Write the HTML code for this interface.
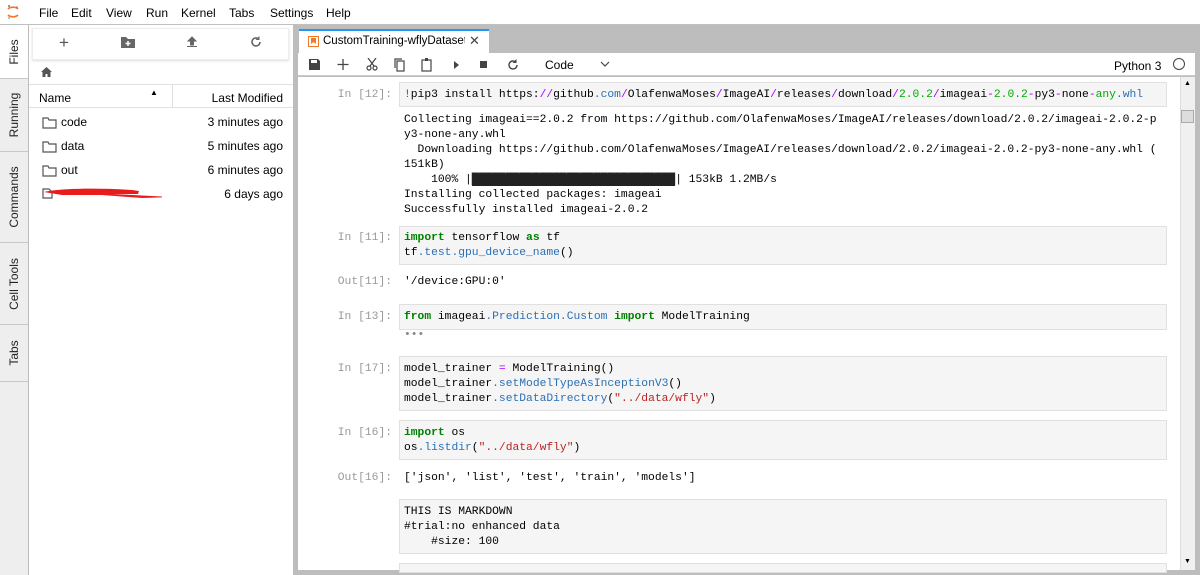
<!DOCTYPE html>
<html><head><meta charset="utf-8"><style>
*{box-sizing:border-box;margin:0;padding:0}
body{width:1200px;height:575px;overflow:hidden;background:#fff;font-family:"Liberation Sans",sans-serif;font-size:12px;color:#000;position:relative}
.abs{position:absolute;white-space:nowrap}
.menu{left:0;top:0;width:1200px;height:25px;background:#fff;border-bottom:1px solid #c0c0c0}
.menu span{position:absolute;top:6px;font-size:12px}
.lt{left:0;top:25px;width:29px;height:550px;background:#eee;border-right:1px solid #bdbdbd}
.tab{position:absolute;left:0;width:28px;border-bottom:1px solid #c8c8c8}
.tab span{position:absolute;left:50%;top:50%;transform:translate(-50%,-50%) rotate(-90deg);white-space:nowrap;font-size:12px;color:#222}
.fp{left:29px;top:25px;width:265px;height:550px;background:#fff}
.split{left:293px;top:25px;width:6px;height:550px;background:#bdbdbd}
.mainbg{left:298px;top:25px;width:902px;height:550px;background:#bdbdbd}
.mono{font-family:"Liberation Mono",monospace;font-size:11.3px;white-space:pre;line-height:15px}
.pr{position:absolute;width:94px;text-align:right;left:298px;color:#999}
.box{position:absolute;left:399px;width:768px;background:#f5f5f5;border:1px solid #e0e0e0}
.ln{position:absolute;left:404px}
.k{color:#008000;font-weight:bold}.b{color:#2a6fb5}.p{color:#a0f}.g{color:#0a0}.r{color:#b22}
.rt{position:absolute;right:11px;text-align:right;white-space:nowrap}
</style></head><body>
<div class="abs menu">
 <svg class="abs" style="left:6px;top:4px" width="14" height="16" viewBox="0 0 14 16"><path d="M2 5a6 4 0 0 1 10 0M2 11a6 4 0 0 0 10 0" fill="none" stroke="#f37726" stroke-width="1.6"/><circle cx="3" cy="2" r="1" fill="#777"/><circle cx="11" cy="3" r=".8" fill="#777"/><circle cx="3" cy="14" r=".8" fill="#777"/></svg>
 <span style="left:39px">File</span><span style="left:71px">Edit</span><span style="left:106px">View</span><span style="left:146px">Run</span><span style="left:181px">Kernel</span><span style="left:229px">Tabs</span><span style="left:270px">Settings</span><span style="left:326px">Help</span>
</div>
<div class="abs lt">
 <div class="tab" style="top:0;height:54px;background:#fff"><span>Files</span></div>
 <div class="tab" style="top:54px;height:73px"><span>Running</span></div>
 <div class="tab" style="top:127px;height:91px"><span>Commands</span></div>
 <div class="tab" style="top:218px;height:82px"><span>Cell Tools</span></div>
 <div class="tab" style="top:300px;height:57px"><span>Tabs</span></div>
</div>
<div class="abs fp">
 <div class="abs" style="left:3px;top:3px;width:257px;height:32px;border:1px solid #eee;box-shadow:0 1px 2px #ddd;background:#fff"></div>
 <div class="abs" style="left:30px;top:8px;font-size:17px;color:#555">+</div>
 <svg class="abs" style="left:92px;top:11px" width="14" height="12"><path d="M0 1h5l2 2h7v9H0z" fill="#666"/><path d="M7 5v5M4.5 7.5h5" stroke="#fff" stroke-width="1.5"/></svg>
 <svg class="abs" style="left:157px;top:11px" width="12" height="12"><path d="M6 1l4 4H7.5v4h-3V5H2z M1 10.5h10" fill="#666" stroke="#666" stroke-width="1"/></svg>
 <svg class="abs" style="left:220px;top:10px" width="14" height="14"><path d="M11 7a4 4 0 1 1-1.2-2.9" fill="none" stroke="#666" stroke-width="1.6"/><path d="M10.5 1v4h-4z" fill="#666"/></svg>
 <svg class="abs" style="left:12px;top:42px" width="11" height="10"><path d="M5.5 0L0 5h1.5v5h3V7h2v3h3V5H11z" fill="#555"/></svg>
 <div class="abs" style="left:0;top:59px;width:264px;height:24px;border-top:1px solid #e0e0e0;border-bottom:1px solid #e0e0e0"></div>
 <div class="abs" style="left:143px;top:60px;width:1px;height:23px;background:#e0e0e0"></div>
 <div class="abs" style="left:10px;top:66px;font-size:12px">Name</div>
 <div class="abs" style="left:121px;top:63px;font-size:8px">▲</div>
 <div class="rt" style="top:66px">Last Modified</div>
 <svg class="abs" style="left:13px;top:90px" width="16" height="110"><g fill="none" stroke="#555" stroke-width="1.2"><path d="M1 3h5l1 2h7v8H1z"/><path d="M1 27h5l1 2h7v8H1z"/><path d="M1 51h5l1 2h7v8H1z"/><path d="M1 74h6l3 3v6H1z"/></g></svg>
 <div class="abs" style="left:32px;top:90px">code</div><div class="rt" style="top:90px">3 minutes ago</div>
 <div class="abs" style="left:32px;top:114px">data</div><div class="rt" style="top:114px">5 minutes ago</div>
 <div class="abs" style="left:32px;top:138px">out</div><div class="rt" style="top:138px">6 minutes ago</div>
 <div class="rt" style="top:162px">6 days ago</div>
 <svg class="abs" style="left:13px;top:160px" width="120" height="15"><path d="M2 7C20 3 60 3 90 5L97 6L96 9L70 9L130 12L100 13L60 10L20 10Z" fill="#e81c1c"/></svg>
</div>
<div class="abs split"></div>
<div class="abs mainbg"></div>
<div class="abs" style="left:299px;top:29px;width:190px;height:24px;background:#fff;border-top:2px solid #2196f3"></div>
<svg class="abs" style="left:308px;top:36px" width="11" height="11"><rect x=".5" y=".5" width="10" height="10" fill="none" stroke="#f37726"/><path d="M3 2h5v6L5.5 6 3 8z" fill="#f37726"/></svg>
<div class="abs" style="left:323px;top:35px;width:142px;overflow:hidden;font-size:11.5px">CustomTraining-wflyDataset</div>
<div class="abs" style="left:469px;top:33px;font-size:13px;color:#444">✕</div>
<div class="abs" style="left:298px;top:53px;width:897px;height:23px;background:#fff;border-bottom:1px solid #ccc"></div>
<svg class="abs" style="left:309px;top:58px" width="200" height="14"><g fill="#444"><path d="M0 1h9l2 2v9H0z M2 2v3h6V2z" fill-rule="evenodd"/></g><path d="M34 1v11M28.5 6.5h11" stroke="#444" stroke-width="1.3"/><g stroke="#444" fill="none" stroke-width="1.2"><circle cx="60" cy="10" r="2"/><circle cx="66" cy="10" r="2"/><path d="M61 8L67 0M65 8L59 0"/><rect x="88" y="3" width="7" height="10"/><path d="M86 10V1h7"/><rect x="113" y="2" width="9" height="11"/></g><rect x="116" y="0" width="3" height="3" fill="#444"/><path d="M145 3l5 4-5 4z" fill="#444"/><rect x="171" y="3" width="7" height="7" fill="#444"/></svg>
<svg class="abs" style="left:506px;top:58px" width="14" height="14"><path d="M11 7a4 4 0 1 1-1.2-2.9" fill="none" stroke="#444" stroke-width="1.4"/><path d="M10.5 1v4h-4z" fill="#444"/></svg>
<div class="abs" style="left:545px;top:58px;font-size:12px">Code</div>
<svg class="abs" style="left:600px;top:61px" width="10" height="6"><path d="M1 1l4 4 4-4" fill="none" stroke="#444" stroke-width="1.2"/></svg>
<div class="abs" style="left:1114px;top:59px;font-size:12px">Python 3</div>
<div class="abs" style="left:1173px;top:58px;width:12px;height:12px;border:1.3px solid #444;border-radius:50%"></div>
<div class="abs" style="left:298px;top:77px;width:897px;height:493px;background:#fff"></div>
<div class="abs" style="left:1180px;top:77px;width:15px;height:493px;background:#f0f0f0;border-left:1px solid #ddd"></div>
<div class="abs" style="left:1181px;top:110px;width:13px;height:13px;background:#ddd;border:1px solid #aaa"></div>
<div class="abs" style="left:1184px;top:80px;font-size:7px">▲</div>
<div class="abs" style="left:1184px;top:558px;font-size:7px">▼</div>

<div class="box" style="top:82px;height:25px"></div>
<div class="box" style="top:226px;height:39px"></div>
<div class="box" style="top:304px;height:26px"></div>
<div class="box" style="top:356px;height:55px"></div>
<div class="box" style="top:420px;height:40px"></div>
<div class="box" style="top:499px;height:55px"></div>
<div class="box" style="top:563px;height:10px"></div>

<div class="mono">
<div class="pr" style="top:88px">In [12]:</div>
<div class="ln" style="top:88px"><span class="p">!</span>pip3 install https:<span class="p">//</span>github<span class="b">.com</span><span class="p">/</span>OlafenwaMoses<span class="p">/</span>ImageAI<span class="p">/</span>releases<span class="p">/</span>download<span class="p">/</span><span class="g">2.0.2</span><span class="p">/</span>imageai<span class="p">-</span><span class="g">2.0.2</span><span class="p">-</span>py3<span class="p">-</span>none<span class="p">-</span><span class="g">any</span><span class="b">.whl</span></div>
<div class="ln" style="top:113px">Collecting imageai==2.0.2 from https://github.com/OlafenwaMoses/ImageAI/releases/download/2.0.2/imageai-2.0.2-p
y3-none-any.whl
  Downloading https://github.com/OlafenwaMoses/ImageAI/releases/download/2.0.2/imageai-2.0.2-py3-none-any.whl (
151kB)
    100% |<span style="background:#222;color:#222">██████████████████████████████</span>| 153kB 1.2MB/s
Installing collected packages: imageai
Successfully installed imageai-2.0.2</div>
<div class="pr" style="top:231px">In [11]:</div>
<div class="ln" style="top:231px"><span class="k">import</span> tensorflow <span class="k">as</span> tf
tf<span class="b">.test.gpu_device_name</span>()</div>
<div class="pr" style="top:275px">Out[11]:</div>
<div class="ln" style="top:275px">'/device:GPU:0'</div>
<div class="pr" style="top:310px">In [13]:</div>
<div class="ln" style="top:310px"><span class="k">from</span> imageai<span class="b">.Prediction.Custom</span> <span class="k">import</span> ModelTraining</div>
<div class="ln" style="top:328px;color:#888">•••</div>
<div class="pr" style="top:362px">In [17]:</div>
<div class="ln" style="top:362px">model_trainer <span class="p">=</span> ModelTraining()
model_trainer<span class="b">.setModelTypeAsInceptionV3</span>()
model_trainer<span class="b">.setDataDirectory</span>(<span class="r">"../data/wfly"</span>)</div>
<div class="pr" style="top:426px">In [16]:</div>
<div class="ln" style="top:426px"><span class="k">import</span> os
os<span class="b">.listdir</span>(<span class="r">"../data/wfly"</span>)</div>
<div class="pr" style="top:471px">Out[16]:</div>
<div class="ln" style="top:471px">['json', 'list', 'test', 'train', 'models']</div>
<div class="ln" style="top:505px">THIS IS MARKDOWN
#trial:no enhanced data
    #size: 100</div>
</div>
</body></html>
